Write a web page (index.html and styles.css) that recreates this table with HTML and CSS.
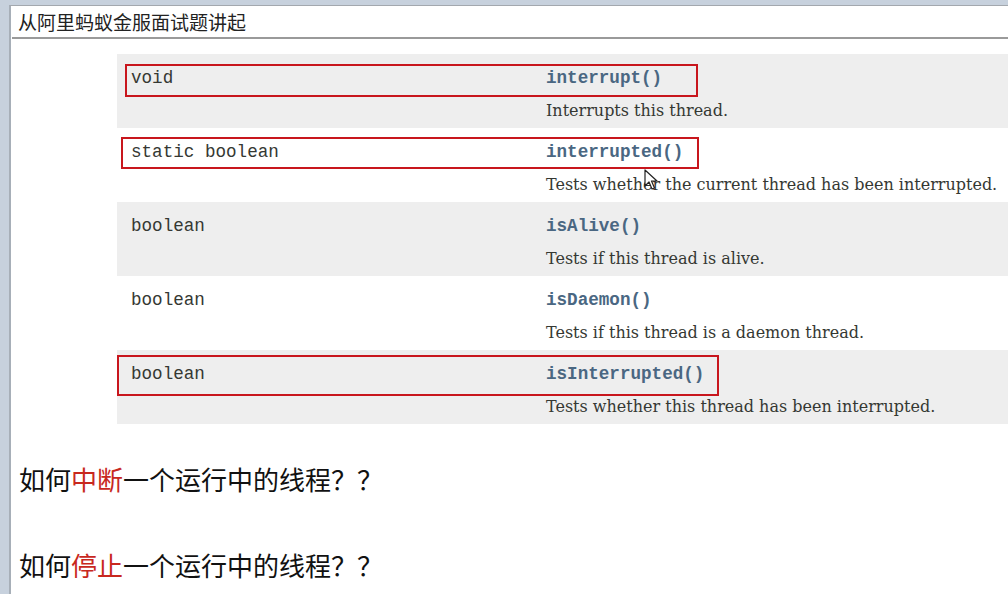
FILE: index.html
```html
<!DOCTYPE html>
<html lang="zh-CN">
<head>
  <meta charset="UTF-8" />
  <title>从阿里蚂蚁金服面试题讲起</title>
  <link rel="stylesheet" href="styles.css">
</head>
<body>

  <div class="frame">
    <div class="title">从阿里蚂蚁金服面试题讲起</div>

    <!-- Method summary from the Thread javadoc -->
    <div class="summary">
      <div class="row alt">
        <div class="type">void</div>
        <div class="info">
          <div class="method">interrupt()</div>
          <div class="desc">Interrupts this thread.</div>
        </div>
        <span class="mark mark-1"></span>
      </div>

      <div class="row">
        <div class="type">static boolean</div>
        <div class="info">
          <div class="method">interrupted()</div>
          <div class="desc">Tests whether the current thread has been interrupted.</div>
        </div>
        <span class="mark mark-2"></span>
        <svg class="cursor" width="14" height="22" viewBox="0 0 14 22">
          <path d="M1 1 L1 17 L5 13 L8 20 L10.5 19 L7.5 12 L13 12 Z" fill="#fff" stroke="#222" stroke-width="1.2" stroke-linejoin="round"/>
        </svg>
      </div>

      <div class="row alt">
        <div class="type">boolean</div>
        <div class="info">
          <div class="method">isAlive()</div>
          <div class="desc">Tests if this thread is alive.</div>
        </div>
      </div>

      <div class="row">
        <div class="type">boolean</div>
        <div class="info">
          <div class="method">isDaemon()</div>
          <div class="desc">Tests if this thread is a daemon thread.</div>
        </div>
      </div>

      <div class="row alt">
        <div class="type">boolean</div>
        <div class="info">
          <div class="method">isInterrupted()</div>
          <div class="desc">Tests whether this thread has been interrupted.</div>
        </div>
        <span class="mark mark-5"></span>
      </div>
    </div>

    <p class="question">如何<span class="hl">中断</span>一个运行中的线程<span class="qm">？</span><span class="qm">？</span></p>
    <p class="question">如何<span class="hl">停止</span>一个运行中的线程<span class="qm">？</span><span class="qm">？</span></p>
  </div>

</body>
</html>
```

FILE: styles.css
```css
html, body {
  margin: 0;
  height: 100%;
  overflow: hidden;
}

body {
  background-color: #c7d1dd;
  font-family: "Liberation Serif", "Noto Sans CJK SC", serif;
}

.frame {
  margin: 5px 0 0 9px;
  height: 589px;
  background: #fff;
  border-top: 1px solid #a3a8ae;
  border-left: 2px solid #a7afb8;
  overflow: hidden;
}

.title {
  margin-left: 1px;
  height: 31px;
  line-height: 31px;
  padding-left: 6px;
  font-family: "Noto Sans CJK SC", sans-serif;
  font-size: 19px;
  color: #222;
  border-bottom: 2px solid #9a9a9a;
}

.summary {
  margin: 15px 0 0 106px;
  width: 900px;
}

.row {
  position: relative;
  display: flex;
  height: 74px;
  background: #fff;
}

.row.alt {
  background: #eeeeee;
}

.type {
  width: 415px;
  padding: 14px 0 0 14px;
  font-family: "Liberation Mono", monospace;
  font-size: 17.6px;
  line-height: 20px;
  color: #353833;
}

.info {
  padding-top: 14px;
}

.method {
  font-family: "Liberation Mono", monospace;
  font-size: 17.6px;
  line-height: 20px;
  font-weight: bold;
  color: #4a6782;
}

.desc {
  margin-top: 12px;
  font-family: "DejaVu Serif", serif;
  font-size: 16px;
  line-height: 22px;
  color: #353833;
}

/* red annotation boxes drawn over the table */
.mark {
  position: absolute;
  border: 2px solid #c8161d;
  box-sizing: border-box;
}

.mark-1 {
  top: 10px;
  left: 8px;
  width: 573px;
  height: 33px;
}

.mark-2 {
  top: 9px;
  left: 4px;
  width: 578px;
  height: 32px;
}

.mark-5 {
  top: 5px;
  left: 0;
  width: 602px;
  height: 41px;
}

.cursor {
  position: absolute;
  top: 41px;
  left: 527px;
}

.question {
  margin: 37px 0 0 8px;
  font-family: "Noto Sans CJK SC", sans-serif;
  font-size: 26px;
  line-height: 36px;
  color: #111;
}

.question + .question {
  margin-top: 50px;
}

.qm {
  display: inline-block;
  width: 26px;
  text-align: center;
}

.hl {
  color: #c8281e;
}
```
